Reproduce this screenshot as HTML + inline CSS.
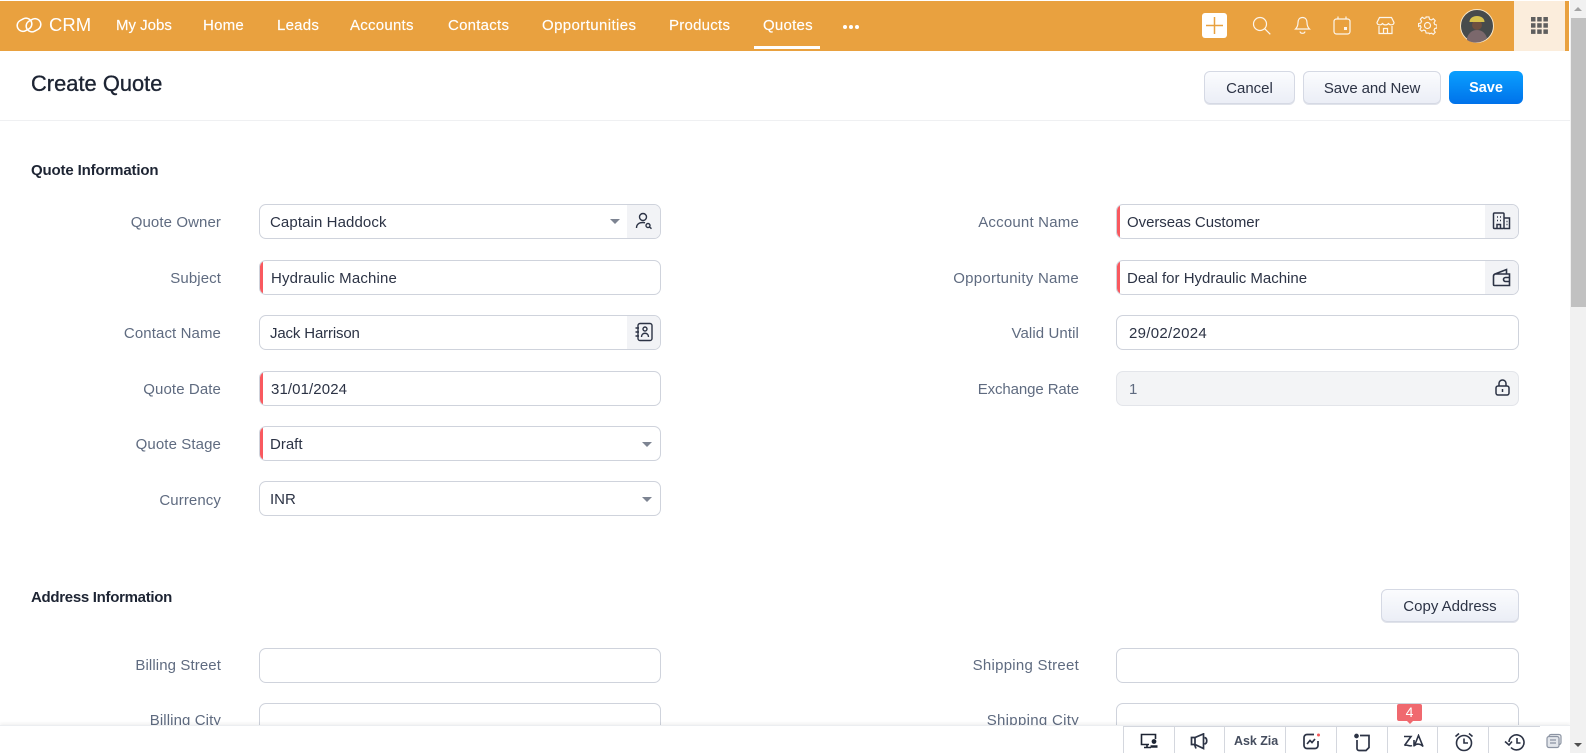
<!DOCTYPE html>
<html><head><meta charset="utf-8"><style>
html,body{margin:0;padding:0;width:1586px;height:753px;overflow:hidden;background:#fff}
body{position:relative;font-family:"Liberation Sans",sans-serif;color:#2c3345}
.a{position:absolute;white-space:nowrap}
.nav{position:absolute;top:16px;font-size:15px;line-height:20px;color:#fff;letter-spacing:.25px;white-space:nowrap;-webkit-text-stroke:.15px #fff}
.lb{position:absolute;width:220px;text-align:right;font-size:15px;line-height:20px;color:#5f6b80;white-space:nowrap;letter-spacing:.1px}
.f{position:absolute;height:33px;box-sizing:content-box;border:1px solid #cfd3dc;border-radius:7px;background:#fff;font-size:15px;line-height:33px;color:#2c3345;overflow:hidden;white-space:nowrap}
.l{left:259px;width:400px}.r{left:1116px;width:401px}
.t{position:absolute;left:10px;top:1px}
.q{position:absolute;left:0;top:0;bottom:0;width:2.500px;background:#f9595f}
.q+.t{left:11px}
.ad{position:absolute;right:0;top:0;width:33px;height:33px;background:#f2f3f6}
.ad svg{position:absolute;left:7px;top:6px}
.car{position:absolute;width:0;height:0;border-left:5px solid transparent;border-right:5px solid transparent;border-top:5px solid #7d8492}
.btn{position:absolute;top:71px;height:31px;border:1px solid #d5d9e4;border-radius:6px;background:linear-gradient(#fbfcfe,#ebeef6);font-size:15px;line-height:33px;text-align:center;color:#2c3345;box-shadow:0 1px 0 #e0e3ea;white-space:nowrap}
.sec{position:absolute;left:31px;font-size:15px;font-weight:bold;line-height:20px;color:#1d2433;letter-spacing:-.15px;white-space:nowrap}
.tab{position:absolute;top:726px;height:27px;border-left:1px solid #d4d7de;border-top:1px solid #d4d7de;background:#fff;box-sizing:border-box}
.tab svg{position:absolute;top:5px}
svg{display:block;fill:none}
</style></head><body>
<!-- header -->
<div class="a" style="left:0;top:1px;width:1569px;height:50px;background:#e9a13f"></div>
<div class="a" style="left:1514px;top:1px;width:51px;height:50px;background:#fbeddc"></div>
<svg class="a" style="left:15px;top:14px" width="28" height="22" viewBox="0 0 28 22" stroke="#fff" stroke-width="1.5"><rect x="2" y="5" width="15" height="11.500" rx="5.700" transform="rotate(-28 9.500 10.750)"/><rect x="11" y="5.500" width="15" height="11.500" rx="5.700" transform="rotate(-28 18.500 11.250)"/></svg>
<div class="a" style="left:49px;top:14px;font-size:18.5px;line-height:22px;color:#fff">CRM</div>
<div class="nav" style="left:116px;letter-spacing:0">My Jobs</div>
<div class="nav" style="left:203px">Home</div>
<div class="nav" style="left:277px">Leads</div>
<div class="nav" style="left:350px">Accounts</div>
<div class="nav" style="left:448px">Contacts</div>
<div class="nav" style="left:542px;letter-spacing:.4px">Opportunities</div>
<div class="nav" style="left:669px">Products</div>
<div class="nav" style="left:763px">Quotes</div>
<div class="a" style="left:754px;top:46px;width:66px;height:2.5px;background:#fff"></div>
<div class="a" style="left:843px;top:25px;width:4px;height:4px;border-radius:50%;background:#fff;box-shadow:6px 0 0 #fff,12px 0 0 #fff"></div>
<div class="a" style="left:1202px;top:13px;width:25px;height:25px;border-radius:3px;background:#fff"></div>
<svg class="a" style="left:1206px;top:17px" width="17" height="17" stroke="#e9a13f" stroke-width="1.5"><path d="M8.5 0v17M0 8.5h17"/></svg>
<svg class="a" style="left:1252px;top:16px" width="20" height="20" stroke="#fff" stroke-width="1.2" opacity=".9"><circle cx="8" cy="8" r="6.5"/><path d="M12.8 12.8l5.5 5.5"/></svg>
<svg class="a" style="left:1294px;top:16px" width="17" height="20" stroke="#fff" stroke-width="1.2" opacity=".9"><path d="M8.5 1.5c-3.200 0-4.500 2.500-4.500 5 0 3-.7 4.700-2.500 6.500h14c-1.800-1.800-2.500-3.500-2.500-6.500 0-2.500-1.300-5-4.500-5zM6 15.500c.5 2.400 4.500 2.400 5 0"/></svg>
<svg class="a" style="left:1333px;top:16px" width="19" height="19" stroke="#fff" stroke-width="1.2" opacity=".9"><rect x="1" y="3" width="16" height="15" rx="2.500"/><path d="M5 .5v3M13 .5v3"/><rect x="11" y="11" width="3" height="3" style="fill:#fff" stroke="none"/></svg>
<svg class="a" style="left:1376px;top:16px" width="19" height="19" stroke="#fff" stroke-width="1.2" opacity=".9"><path d="M3.500 1.500h12l2.500 5c0 3-5 3-5.500 .5-.5 2.500-5.500 2.500-6 0-.5 2.500-5.500 2.500-5.500-.5zM3 10v7.500h13V10M7.500 17.500v-5h4v5"/></svg>
<svg class="a" style="left:1418px;top:16px" width="19" height="19" stroke="#fff" stroke-width="1.2" opacity=".9"><circle cx="9.500" cy="9.500" r="3"/><path d="M8 1h3l.6 2.400 1.900.8 2.100-1.300 2 2.100-1.300 2.100.8 1.900 2.400.6v3l-2.400.6-.8 1.900 1.300 2.100-2 2-2.100-1.200-1.900.8L11 18H8l-.6-2.400-1.900-.8-2.100 1.200-2-2 1.300-2.100-.8-1.900L0 11V8l2.400-.6.8-1.900L1.900 3.400l2-2.100L6 2.600l1.900-.8z" transform="translate(.5 0) scale(.95)"/></svg>
<svg class="a" style="left:1460px;top:9px" width="34" height="34" viewBox="0 0 34 34"><circle cx="17" cy="17" r="16.500" style="fill:#474b4c" stroke="#f8e6c6" stroke-width="1"/><path d="M7 29c2-6 6-8 10-8s8 2 10 8a16 16 0 0 1-20 2z" style="fill:#7b686c"/><circle cx="17" cy="16" r="5" style="fill:#6e5040"/><path d="M9.500 13c0-8 15-8 15 0z" style="fill:#d8c24e"/></svg>
<svg class="a" style="left:1531px;top:17px" width="17" height="17"><g style="fill:#5f5f5f"><rect width="4.500" height="4.500"/><rect x="6.200" width="4.500" height="4.500"/><rect x="12.400" width="4.500" height="4.500"/><rect y="6.200" width="4.500" height="4.500"/><rect x="6.200" y="6.200" width="4.500" height="4.500"/><rect x="12.400" y="6.200" width="4.500" height="4.500"/><rect y="12.400" width="4.500" height="4.500"/><rect x="6.200" y="12.400" width="4.500" height="4.500"/><rect x="12.400" y="12.400" width="4.500" height="4.500"/></g></svg>
<!-- title bar -->
<div class="a" style="left:31px;top:71px;font-size:21.8px;line-height:26px;color:#1d2433;-webkit-text-stroke:.35px #1d2433;letter-spacing:.05px">Create Quote</div>
<div class="btn" style="left:1204px;width:89px">Cancel</div>
<div class="btn" style="left:1303px;width:136px;letter-spacing:-.1px">Save and New</div>
<div class="btn" style="left:1449px;width:74px;height:33px;line-height:34px;border:0;background:linear-gradient(#0aa0ff,#0072ea);color:#fff;font-size:14.5px;font-weight:bold;box-shadow:none">Save</div>
<div class="a" style="left:0;top:120px;width:1570px;height:1px;background:#eff0f2"></div>
<!-- section 1 -->
<div class="sec" style="top:161px">Quote Information</div>
<div class="lb" style="left:1px;top:212.500px">Quote Owner</div>
<div class="lb" style="left:1px;top:268.500px">Subject</div>
<div class="lb" style="left:1px;top:323.500px">Contact Name</div>
<div class="lb" style="left:1px;top:379.500px">Quote Date</div>
<div class="lb" style="left:1px;top:434.500px">Quote Stage</div>
<div class="lb" style="left:1px;top:490.500px">Currency</div>
<div class="lb" style="left:859px;top:212.500px;letter-spacing:.2px">Account Name</div>
<div class="lb" style="left:859px;top:268.500px;letter-spacing:.25px">Opportunity Name</div>
<div class="lb" style="left:859px;top:323.500px">Valid Until</div>
<div class="lb" style="left:859px;top:379.500px;letter-spacing:-.1px">Exchange Rate</div>

<div class="f l" style="top:204px"><span class="t" style="letter-spacing:.1px">Captain Haddock</span>
 <i class="car" style="left:350px;top:14px"></i>
 <div class="ad"><svg width="20" height="20" stroke="#2c3345" stroke-width="1.4"><circle cx="9" cy="6" r="3.500"/><path d="M2.500 17c0-3.500 2.500-5.500 6.500-5.500 1 0 1.500.1 2 .3"/><circle cx="14" cy="14.500" r="2"/><path d="M15.500 16l2 1.700"/></svg></div></div>
<div class="f l" style="top:260px"><i class="q"></i><span class="t" style="letter-spacing:.15px">Hydraulic Machine</span></div>
<div class="f l" style="top:315px"><span class="t" style="letter-spacing:-.15px">Jack Harrison</span>
 <div class="ad"><svg width="20" height="20" stroke="#2c3345" stroke-width="1.4"><rect x="4" y="1.500" width="14" height="17" rx="2"/><path d="M1.500 6H5M1.500 10H5M1.500 14H5"/><circle cx="11" cy="7" r="2"/><path d="M7.500 15c0-5 7-5 7 0"/></svg></div></div>
<div class="f l" style="top:371px"><i class="q"></i><span class="t" style="letter-spacing:.1px">31/01/2024</span></div>
<div class="f l" style="top:426px"><i class="q"></i><span class="t" style="left:10px">Draft</span><i class="car" style="left:382px;top:15px"></i></div>
<div class="f l" style="top:481px"><span class="t">INR</span><i class="car" style="left:382px;top:15px"></i></div>

<div class="f r" style="top:204px"><i class="q"></i><span class="t" style="left:10px;letter-spacing:-.05px">Overseas Customer</span>
 <div class="ad"><svg width="20" height="20" stroke="#2c3345" stroke-width="1.5"><rect x="1.500" y="2" width="10.500" height="15.500" rx="1"/><path d="M12 7h5.500v10.500H12M5 6h1M8 6h1M5 9.500h1M8 9.500h1M5 17v-3.500h3.500V17M14.500 10.500h1M14.500 13.500h1"/></svg></div></div>
<div class="f r" style="top:260px"><i class="q"></i><span class="t" style="left:10px">Deal for Hydraulic Machine</span>
 <div class="ad"><svg width="20" height="20" stroke="#2c3345" stroke-width="1.6" style="top:7px"><path d="M1.500 8c0-1 .5-1.500 1.500-2L14.500 1.500V6M1.500 8v8.500a1 1 0 0 0 1 1H17.500V6H3.500M17.500 9.500h-4a2 2 0 0 0 0 4h4"/></svg></div></div>
<div class="f r" style="top:315px"><span class="t" style="left:12px;letter-spacing:.3px">29/02/2024</span></div>
<div class="f r" style="top:371px;background:#f3f4f6;border-color:#e3e5ea"><span class="t" style="left:12px;color:#5f6b80">1</span>
 <svg class="a" style="left:377px;top:6px" width="18" height="20" stroke="#2c3345" stroke-width="1.5"><rect x="2" y="8" width="13" height="9" rx="2"/><path d="M5 8V5.500a3.500 3.500 0 0 1 7 0V8"/><path d="M8.500 11v3"/></svg></div>

<!-- section 2 -->
<div class="sec" style="top:588px;letter-spacing:-.3px">Address Information</div>
<div class="btn" style="left:1381px;top:589px;width:136px">Copy Address</div>
<div class="lb" style="left:1px;top:655.500px">Billing Street</div>
<div class="lb" style="left:859px;top:655.500px;letter-spacing:.25px">Shipping Street</div>
<div class="lb" style="left:1px;top:711px">Billing City</div>
<div class="lb" style="left:859px;top:711px;letter-spacing:.3px">Shipping City</div>
<div class="f l" style="top:648px"></div>
<div class="f r" style="top:648px"></div>
<div class="f l" style="top:703px"></div>
<div class="f r" style="top:703px"></div>

<!-- footer -->
<div class="a" style="left:0;top:725px;width:1570px;height:28px;background:#fff;border-top:1px solid #eceef1;box-shadow:0 -2px 3px rgba(0,0,0,.05);box-sizing:border-box"></div>
<div class="tab" style="left:1123px;width:51px"><svg style="left:16px;top:6px" width="19" height="18" stroke="#1d2433" stroke-width="1.600"><path d="M9 11.500H1.500V1.500h14V6M4 14.500h7M7 11.500v3"/><circle cx="14" cy="8.500" r="1.600" style="fill:#1d2433"/><path d="M10.500 13.500h7" stroke-width="2.500"/></svg></div>
<div class="tab" style="left:1174px;width:50px"><svg style="left:15px;top:6px" width="20" height="18" stroke="#2c3345" stroke-width="1.700"><path d="M1.500 4.500v7H5l8.500 4V.9L5 4.500zM5 4.500v7M14.500 4.500c3 .5 3 6 0 6.500M4.500 11.500l1.500 4"/></svg></div>
<div class="tab" style="left:1224px;width:61px"><div class="a" style="left:9px;top:6px;font-size:12.500px;line-height:16px;font-weight:bold;color:#454d5e;letter-spacing:-.05px">Ask Zia</div></div>
<div class="tab" style="left:1285px;width:51px"><svg style="left:16px;top:5px" width="20" height="20" stroke="#2c3345" stroke-width="1.700"><path d="M12 2.500H5a3 3 0 0 0-3 3v8a3 3 0 0 0 3 3h8a3 3 0 0 0 3-3V9"/><path d="M5 12l3-3.500 2 2 3-3.500"/><circle cx="16.500" cy="3" r="1.500" style="fill:#f25a5a" stroke="none"/></svg></div>
<div class="tab" style="left:1336px;width:51px"><svg style="left:16px;top:6px" width="20" height="20" stroke="#2c3345" stroke-width="1.700"><circle cx="3.500" cy="3" r="1.500" style="fill:#2c3345"/><path d="M7 2.500h9v12l-3 3H6a2 2 0 0 1-2-2V7"/></svg></div>
<div class="tab" style="left:1387px;width:50px"><svg style="left:15px;top:7px" width="21" height="15" stroke="#2c3345" stroke-width="1.600"><path d="M1 2.500h7L1.500 11.500c2.500-1.500 5 1.500 7.500 0M11 12.500V6M15.500 1.500l-4 10c2-2 6-2 8.500 1z"/></svg></div>
<div class="tab" style="left:1437px;width:51px"><svg style="left:16px;top:5px" width="20" height="20" stroke="#2c3345" stroke-width="1.600"><circle cx="10" cy="11" r="7.500"/><path d="M10 6.500V11h4M1.500 4.500L5 1.500M18.500 4.500L15 1.500"/></svg></div>
<div class="tab" style="left:1488px;width:52px"><svg style="left:15px;top:5px" width="22" height="20" stroke="#2c3345" stroke-width="1.600"><path d="M5 10a7.500 7.500 0 1 1 2 5.500M1 9.500l4 3.500 3-3.500"/><path d="M13 6v5h3.500"/></svg></div>
<svg class="a" style="left:1546px;top:733px" width="16" height="16" stroke="#8c94a3" stroke-width="1.200"><rect x="3" y="1.500" width="12" height="10" rx="2" style="fill:#eef0f3"/><rect x="1" y="3.500" width="12" height="11" rx="2" style="fill:#e3e6eb"/><path d="M4 7h6M4 10h6"/></svg>
<div class="a" style="left:1397px;top:704px;width:25px;height:17px;background:#f0696f;border-radius:2px;color:#fff;font-size:14px;line-height:17px;text-align:center">4</div>
<div class="a" style="left:1407px;top:721px;border-left:3px solid transparent;border-right:3px solid transparent;border-top:3px solid #f0696f"></div>

<!-- scrollbar -->
<div class="a" style="left:1570px;top:0;width:16px;height:753px;background:#f1f1f1"></div>
<div class="a" style="left:1571px;top:18px;width:15px;height:289px;background:#c1c1c1"></div>
<div class="a" style="left:1574px;top:7px;border-left:4px solid transparent;border-right:4px solid transparent;border-bottom:4px solid #a3a3a3"></div>
<div class="a" style="left:1574px;top:743px;border-left:4px solid transparent;border-right:4px solid transparent;border-top:4px solid #505050"></div>
</body></html>
